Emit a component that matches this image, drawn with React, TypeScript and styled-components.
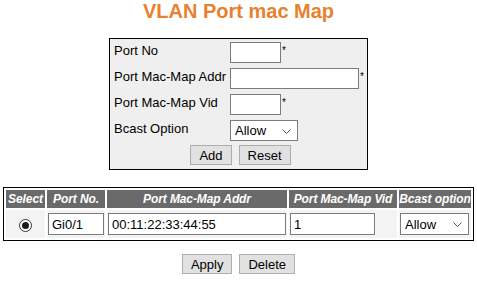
import React from 'react';
import styled, { createGlobalStyle } from 'styled-components';

const GlobalStyle = createGlobalStyle`
  html, body {
    margin: 0;
    padding: 0;
    background: #ffffff;
    font-family: Arial, "Liberation Sans", sans-serif;
    font-size: 13px;
    color: #000;
  }
`;

const Page = styled.div`
  width: 477px;
  display: flex;
  flex-direction: column;
  align-items: center;
`;

const Title = styled.h1`
  margin: 0;
  font-size: 20px;
  line-height: 23px;
  font-weight: bold;
  color: #e8812f;
`;

const FormBox = styled.div`
  margin-top: 15px;
  width: 259px;
  box-sizing: border-box;
  border: 1px solid #000;
  background: #f0efef;
  padding: 3px 0 4px 4px;
  display: flex;
  flex-direction: column;
`;

const FieldGrid = styled.div`
  display: grid;
  grid-template-columns: 116px auto;
  grid-auto-rows: 21px;
  row-gap: 5px;
  align-items: center;
`;

const Label = styled.span`
  padding-bottom: 4px;
  white-space: nowrap;
`;

const FieldCell = styled.div`
  display: flex;
  align-items: flex-start;
  height: 100%;
`;

const TextBox = styled.input<{ $w: number }>`
  width: ${(p) => p.$w}px;
  height: 21px;
  box-sizing: border-box;
  border: 1px solid #7b7b7b;
  background: #fff;
  padding: 0 3px;
  font-family: Arial, "Liberation Sans", sans-serif;
  font-size: 13px;
  color: #000;
  outline: none;
`;

const Star = styled.span`
  font-size: 10px;
  line-height: 10px;
  margin: 4px 0 0 1px;
`;

const SelectWrap = styled.div<{ $w: number; $h: number }>`
  position: relative;
  width: ${(p) => p.$w}px;
  height: ${(p) => p.$h}px;
`;

const SelectBox = styled.select`
  appearance: none;
  -webkit-appearance: none;
  width: 100%;
  height: 100%;
  box-sizing: border-box;
  border: 1px solid #7b7b7b;
  border-radius: 0;
  background: #fff;
  padding: 0 0 0 4px;
  font-family: Arial, "Liberation Sans", sans-serif;
  font-size: 13px;
  color: #000;
  outline: none;
`;

const Chevron = styled.svg`
  position: absolute;
  right: 7px;
  top: 50%;
  margin-top: -2px;
  pointer-events: none;
`;

const ButtonRow = styled.div<{ $top: number }>`
  display: flex;
  justify-content: center;
  gap: 7px;
  margin-top: ${(p) => p.$top}px;
`;

const Button = styled.button`
  height: 20px;
  box-sizing: border-box;
  padding: 0 8px;
  border: 1px solid #adadad;
  background: #e1e1e1;
  font-family: Arial, "Liberation Sans", sans-serif;
  font-size: 13px;
  color: #000;
  border-radius: 0;
`;

const Table = styled.table`
  margin-top: 17px;
  width: 471px;
  border: 1px solid #000;
  border-spacing: 2px;
  table-layout: fixed;
`;

const HeadCell = styled.th<{ $w: number }>`
  width: ${(p) => p.$w}px;
  height: 18px;
  padding: 0;
  line-height: 18px;
  background: #6a6a6a;
  color: #fff;
  font-weight: bold;
  font-style: italic;
  font-size: 12px;
  letter-spacing: -0.1px;
  white-space: nowrap;
  text-align: center;
`;

const BodyCell = styled.td<{ $center?: boolean }>`
  height: 28px;
  padding: 0 1px;
  background: #f3f3f3;
  text-align: ${(p) => (p.$center ? 'center' : 'left')};
  vertical-align: middle;
`;

const Radio = styled.span`
  display: inline-flex;
  vertical-align: middle;
  align-items: center;
  justify-content: center;
  width: 13px;
  height: 13px;
  box-sizing: border-box;
  border: 1px solid #333;
  border-radius: 50%;
  background: #fff;
  &::after {
    content: '';
    width: 7px;
    height: 7px;
    border-radius: 50%;
    background: #1a1a1a;
  }
`;

const CellInput = styled(TextBox)`
  height: 22px;
  display: block;
`;

const Select = ({ w, h }: { w: number; h: number }) => (
  <SelectWrap $w={w} $h={h}>
    <SelectBox defaultValue="Allow">
      <option>Allow</option>
      <option>Drop</option>
    </SelectBox>
    <Chevron width="9" height="5" viewBox="0 0 9 5">
      <path d="M0.5 0.5 L4.5 4.5 L8.5 0.5" fill="none" stroke="#555" strokeWidth="1" />
    </Chevron>
  </SelectWrap>
);

export default function App() {
  return (
    <>
      <GlobalStyle />
      <Page>
        <Title>VLAN Port mac Map</Title>
        <FormBox>
          <FieldGrid>
            <Label>Port No</Label>
            <FieldCell>
              <TextBox $w={51} />
              <Star>*</Star>
            </FieldCell>
            <Label>Port Mac-Map Addr</Label>
            <FieldCell>
              <TextBox $w={129} />
              <Star>*</Star>
            </FieldCell>
            <Label>Port Mac-Map Vid</Label>
            <FieldCell>
              <TextBox $w={51} />
              <Star>*</Star>
            </FieldCell>
            <Label>Bcast Option</Label>
            <FieldCell>
              <Select w={68} h={21} />
            </FieldCell>
          </FieldGrid>
          <ButtonRow $top={4}>
            <Button>Add</Button>
            <Button>Reset</Button>
          </ButtonRow>
        </FormBox>
        <Table>
          <thead>
            <tr>
              <HeadCell $w={39}>Select</HeadCell>
              <HeadCell $w={58}>Port No.</HeadCell>
              <HeadCell $w={180}>Port Mac-Map Addr</HeadCell>
              <HeadCell $w={108}>Port Mac-Map Vid</HeadCell>
              <HeadCell $w={72}>Bcast option</HeadCell>
            </tr>
          </thead>
          <tbody>
            <tr>
              <BodyCell $center>
                <Radio />
              </BodyCell>
              <BodyCell>
                <CellInput $w={56} defaultValue="Gi0/1" />
              </BodyCell>
              <BodyCell>
                <CellInput $w={178} defaultValue="00:11:22:33:44:55" />
              </BodyCell>
              <BodyCell>
                <CellInput $w={85} defaultValue="1" />
              </BodyCell>
              <BodyCell>
                <Select w={69} h={22} />
              </BodyCell>
            </tr>
          </tbody>
        </Table>
        <ButtonRow $top={13}>
          <Button>Apply</Button>
          <Button>Delete</Button>
        </ButtonRow>
      </Page>
    </>
  );
}
